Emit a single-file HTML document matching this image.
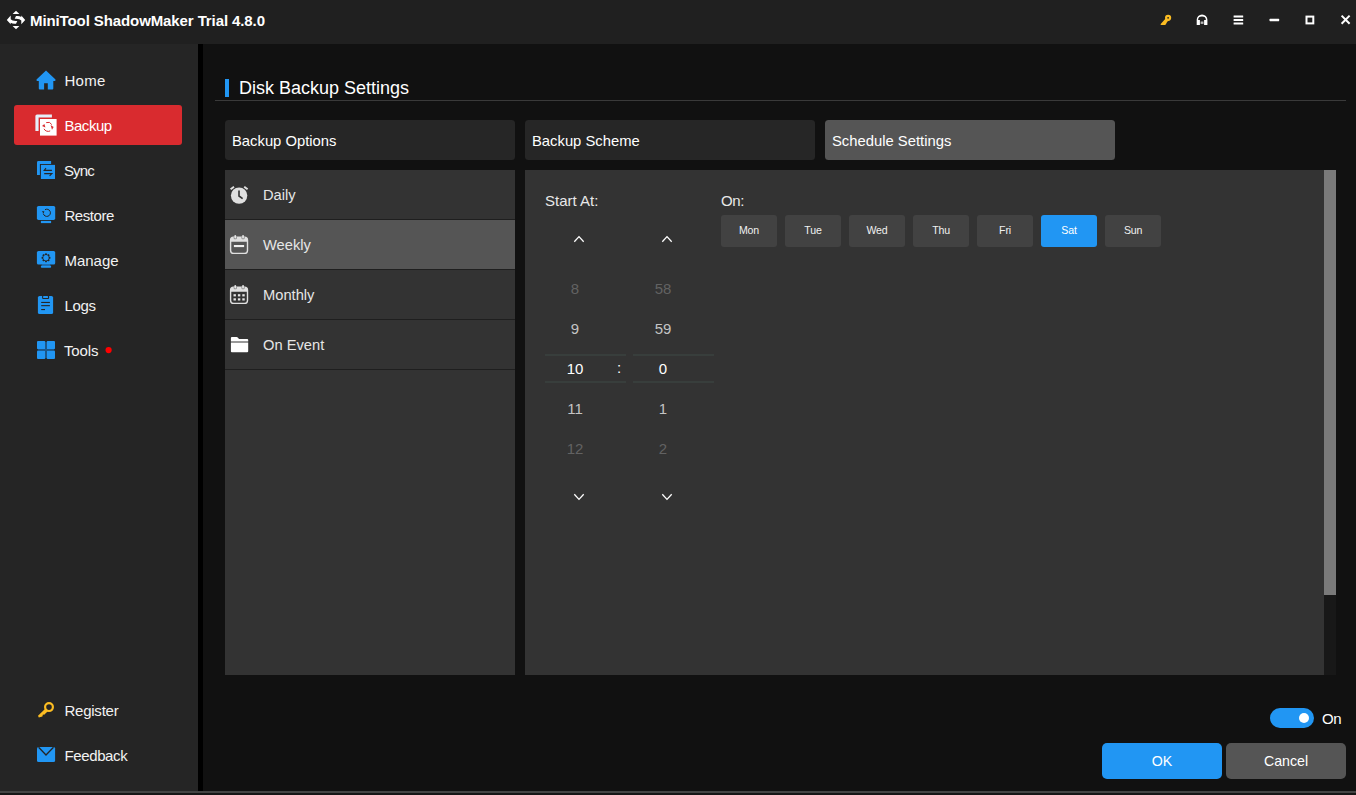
<!DOCTYPE html>
<html>
<head>
<meta charset="utf-8">
<title>MiniTool ShadowMaker Trial 4.8.0</title>
<style>
*{box-sizing:border-box;margin:0;padding:0}
html,body{width:1356px;height:795px;overflow:hidden;background:#111111;font-family:"Liberation Sans",sans-serif;color:#fff}
.abs{position:absolute}
#titlebar{position:absolute;left:0;top:0;width:1356px;height:44px;background:#202020}
#apptitle{position:absolute;left:30px;top:12px;font-size:15px;font-weight:bold;line-height:18px;white-space:nowrap;color:#fff;letter-spacing:-0.1px}
#sidebar{position:absolute;left:0;top:44px;width:198px;height:747px;background:#252525}
#divider{position:absolute;left:198px;top:44px;width:5px;height:747px;background:#000}
#bottomline{position:absolute;left:0;top:791px;width:1356px;height:2px;background:#444}
#bottomdark{position:absolute;left:0;top:793px;width:1356px;height:2px;background:#161616}
.nav{position:absolute;left:14px;width:168px;height:40px;border-radius:3px}
.nav.sel{background:#d92b2f}
.nav .lbl{position:absolute;left:50px;top:12px;font-size:15px;line-height:18px;white-space:nowrap;color:#f2f2f2}
.nav svg{position:absolute}
#pagetitle{position:absolute;left:239px;top:77px;font-size:18px;line-height:22px;white-space:nowrap;color:#fff}
#titlebarblue{position:absolute;left:225px;top:79px;width:4px;height:18px;background:#2196f3}
#titleline{position:absolute;left:215px;top:100px;width:1131px;height:1px;background:#3a3a3a}
.tab{position:absolute;top:120px;width:290px;height:40px;border-radius:3.5px;background:#262626;font-size:14.8px;line-height:42px;padding-left:7px;color:#fff;white-space:nowrap}
.tab.sel{background:#555}
#leftpanel{position:absolute;left:225px;top:170px;width:290px;height:505px;background:#333}
.row{position:absolute;left:0;width:290px;height:50px;border-bottom:1px solid #1f1f1f;font-size:15px;color:#e6e6e6}
.row.sel{background:#555}
.row .lbl{position:absolute;left:38px;top:16px;font-size:14.7px;line-height:18px;white-space:nowrap}
.row svg{position:absolute}
#mainpanel{position:absolute;left:525px;top:170px;width:799px;height:505px;background:#333}
#sbthumb{position:absolute;left:1324px;top:170px;width:12px;height:425px;background:#7a7a7a}
#sbtrack{position:absolute;left:1324px;top:595px;width:12px;height:80px;background:#181818}
.seg{position:absolute;font-size:15px;line-height:18px;white-space:nowrap;color:#e8e8e8}
.num{position:absolute;width:60px;text-align:center;font-size:15px;line-height:18px;white-space:nowrap}
.hl{position:absolute;height:2px;background:#383e3c}
.day{position:absolute;top:215px;width:56px;height:32px;border-radius:3px;background:#424242;color:#f0f0f0;font-size:10.6px;letter-spacing:-0.2px;line-height:31px;text-align:center}
.day.sel{background:#2196f3;color:#fff}
.btn{position:absolute;top:743px;width:120px;height:36px;border-radius:5px;font-size:14.2px;line-height:37px;text-align:center;color:#fff}
</style>
</head>
<body>
<div id="titlebar"></div>
<div id="apptitle">MiniTool ShadowMaker Trial 4.8.0</div>
<div id="sidebar"></div>
<div id="divider"></div>
<div id="bottomline"></div>
<div id="bottomdark"></div>

<!-- NAV -->
<div class="nav" style="top:60px"><div class="lbl" style="letter-spacing:0.3px;left:50.4px">Home</div></div>
<div class="nav sel" style="top:105px"><div class="lbl" style="color:#fff;letter-spacing:-0.45px;left:50.4px">Backup</div></div>
<div class="nav" style="top:150px"><div class="lbl" style="letter-spacing:-0.9px">Sync</div></div>
<div class="nav" style="top:195px"><div class="lbl" style="letter-spacing:-0.42px;left:50.4px">Restore</div></div>
<div class="nav" style="top:240px"><div class="lbl" style="left:50.4px">Manage</div></div>
<div class="nav" style="top:285px"><div class="lbl" style="letter-spacing:-0.3px;left:50.4px">Logs</div></div>
<div class="nav" style="top:330px"><div class="lbl" style="letter-spacing:-0.15px">Tools</div></div>
<div class="nav" style="top:690px"><div class="lbl" style="letter-spacing:-0.22px;left:50.4px">Register</div></div>
<div class="nav" style="top:735px"><div class="lbl" style="letter-spacing:-0.36px;left:50.4px">Feedback</div></div>

<!-- HEADER -->
<div id="titlebarblue"></div>
<div id="pagetitle">Disk Backup Settings</div>
<div id="titleline"></div>

<div class="tab" style="left:225px">Backup Options</div>
<div class="tab" style="left:525px">Backup Scheme</div>
<div class="tab sel" style="left:825px">Schedule Settings</div>

<div id="leftpanel">
  <div class="row" style="top:0"><div class="lbl">Daily</div></div>
  <div class="row sel" style="top:50px"><div class="lbl">Weekly</div></div>
  <div class="row" style="top:100px"><div class="lbl">Monthly</div></div>
  <div class="row" style="top:150px"><div class="lbl">On Event</div></div>
</div>

<div id="mainpanel"></div>
<div id="sbthumb"></div>
<div id="sbtrack"></div>

<div class="seg" style="left:545px;top:192px">Start At:</div>
<div class="seg" style="left:721px;top:192px;letter-spacing:-0.4px">On:</div>

<div class="day" style="left:721px">Mon</div>
<div class="day" style="left:785px">Tue</div>
<div class="day" style="left:849px">Wed</div>
<div class="day" style="left:913px">Thu</div>
<div class="day" style="left:977px">Fri</div>
<div class="day sel" style="left:1041px">Sat</div>
<div class="day" style="left:1105px">Sun</div>


<!-- TIME PICKER -->
<svg class="abs" style="left:573px;top:234px" width="12" height="9" viewBox="0 0 12 9"><path d="M1.3 7.7 L6 2.6 L10.7 7.7" fill="none" stroke="#fff" stroke-width="1.3"/></svg>
<svg class="abs" style="left:661px;top:234px" width="12" height="9" viewBox="0 0 12 9"><path d="M1.3 7.7 L6 2.6 L10.7 7.7" fill="none" stroke="#fff" stroke-width="1.3"/></svg>
<svg class="abs" style="left:573px;top:493px" width="12" height="9" viewBox="0 0 12 9"><path d="M1.3 1.3 L6 6.4 L10.7 1.3" fill="none" stroke="#fff" stroke-width="1.3"/></svg>
<svg class="abs" style="left:661px;top:493px" width="12" height="9" viewBox="0 0 12 9"><path d="M1.3 1.3 L6 6.4 L10.7 1.3" fill="none" stroke="#fff" stroke-width="1.3"/></svg>

<div class="num" style="left:545px;top:280px;color:#626262">8</div>
<div class="num" style="left:633px;top:280px;color:#626262">58</div>
<div class="num" style="left:545px;top:320px;color:#c4c4c4">9</div>
<div class="num" style="left:633px;top:320px;color:#c4c4c4">59</div>
<div class="hl" style="left:545px;top:354px;width:81px"></div>
<div class="hl" style="left:633px;top:354px;width:81px"></div>
<div class="num" style="left:545px;top:360px;color:#fff">10</div>
<div class="num" style="left:633px;top:360px;color:#fff">0</div>
<div class="seg" style="left:617px;top:359px;color:#fff">:</div>
<div class="hl" style="left:545px;top:381px;width:81px"></div>
<div class="hl" style="left:633px;top:381px;width:81px"></div>
<div class="num" style="left:545px;top:400px;color:#c4c4c4">11</div>
<div class="num" style="left:633px;top:400px;color:#c4c4c4">1</div>
<div class="num" style="left:545px;top:440px;color:#626262">12</div>
<div class="num" style="left:633px;top:440px;color:#626262">2</div>

<!-- TOGGLE -->
<div class="abs" style="left:1270px;top:708px;width:44px;height:20px;border-radius:10px;background:#2196f3"></div>
<div class="abs" style="left:1298.8px;top:713px;width:10.4px;height:10.4px;border-radius:5.2px;background:#fff"></div>
<div class="seg" style="left:1322px;top:710px;color:#fff;letter-spacing:-0.3px">On</div>

<div class="btn" style="left:1102px;background:#2196f3">OK</div>
<div class="btn" style="left:1226px;background:#555">Cancel</div>

<!-- ICONS -->
<svg class="abs" style="left:0;top:0" width="1356" height="795" viewBox="0 0 1356 795">
<!-- logo -->
<g fill="#fff">
<path d="M16 10.8 L19.4 13.9 L12.6 13.9 Z"/>
<path d="M16 29.2 L19.4 26.1 L12.6 26.1 Z"/>
<path d="M6.8 19.9 L10.7 15.5 L10.7 19.3 Q12.2 21.4 17.3 21 L16 23.7 Q12.6 24.1 10.7 22.8 L10.7 24.3 Z"/>
<path d="M25.2 19.9 L21.3 24.3 L21.3 20.5 Q19.8 18.4 14.7 18.8 L16 16.1 Q19.4 15.7 21.3 17 L21.3 15.5 Z"/>
</g>
<!-- titlebar key -->
<g>
<path d="M1165.6 18.6 L1160.7 23.9 L1160.7 25.1 L1165.3 25.1 L1166.3 23.4 L1167.2 21.8 L1169 20.6 Z" fill="#fbbc22"/>
<circle cx="1168.1" cy="17.8" r="2" fill="none" stroke="#fbbc22" stroke-width="2.2"/>
</g>
<!-- headset -->
<path d="M1196.7 25.1 L1196.7 19.8 A5.35 5.35 0 0 1 1207.4 19.8 L1207.4 25.1 L1204.1 25.1 L1204.1 19.9 L1205.9 19.9 A3.9 3.4 0 0 0 1198.1 19.9 L1199.9 19.9 L1199.9 25.1 Z" fill="#fff"/>
<rect x="1200.6" y="21.5" width="2.9" height="2.4" fill="#b5b5b5"/>
<!-- menu -->
<g fill="#fff">
<rect x="1233.6" y="15.5" width="9.6" height="2" rx="0.3"/>
<rect x="1233.6" y="19" width="9.6" height="2" rx="0.3"/>
<rect x="1233.6" y="22.5" width="9.6" height="2" rx="0.3"/>
<rect x="1269.5" y="18.8" width="9.7" height="2.4" rx="0.6"/>
</g>
<rect x="1306.5" y="16.6" width="6.8" height="6.8" fill="none" stroke="#fff" stroke-width="2"/>
<path d="M1341.6 15.6 L1349.6 23.8 M1349.6 15.6 L1341.6 23.8" stroke="#fff" stroke-width="2" fill="none"/>

<!-- home -->
<path d="M46 70.6 L55.5 79.5 Q55.9 80.9 54.8 80.9 L53.3 80.9 L53.3 88.6 Q53.3 89.6 52.3 89.6 L47.8 89.6 L47.8 83.2 L44.1 83.2 L44.1 89.6 L39.8 89.6 Q38.8 89.6 38.8 88.6 L38.8 80.9 L37.2 80.9 Q36.1 80.9 36.5 79.5 Z" fill="#2196f3"/>
<!-- backup -->
<path d="M35.4 130.9 L35.4 116 Q35.4 114.4 37 114.4 L51.9 114.4 L51.9 117.5 L38.6 117.5 L38.6 130.9 Z" fill="#e6effa"/>
<rect x="40" y="119" width="16.6" height="16.6" fill="#fff"/>
<g fill="none" stroke="#d92b2f" stroke-width="1">
<path d="M46.2 122.6 A4.6 4.6 0 0 1 51.8 124.6"/>
<path d="M50.2 130.9 A4.6 4.6 0 0 1 44 128.8"/>
</g>
<path d="M50.6 125 L53.6 127 L52 129.8 Z" fill="#d92b2f"/>
<path d="M42 126 L44.4 124 L45.4 127.6 Z" fill="#d92b2f"/>
<!-- sync -->
<path d="M37 174.9 L37 162.4 Q37 161 38.4 161 L51.1 161 L51.1 163.9 L39.9 163.9 L39.9 174.9 Z" fill="#2196f3"/>
<rect x="40.9" y="164.9" width="14.1" height="14.1" fill="#2196f3"/>
<g stroke="#252525" stroke-width="1.1" fill="none">
<path d="M51.9 170.4 L44.2 170.4 L46 168.2"/>
<path d="M44.2 173.6 L51.9 173.6 L49.6 175.9"/>
</g>
<!-- restore -->
<rect x="36.9" y="205.9" width="18.3" height="14" rx="1.6" fill="#2196f3"/>
<rect x="40.9" y="220.9" width="10.2" height="2.2" fill="#2196f3"/>
<path d="M43.3 213.6 A3.6 3.6 0 1 0 45 209.7" fill="none" stroke="#252525" stroke-width="1"/>
<path d="M41.9 211.3 L44.4 211.3 L43.6 213.6 Z" fill="#252525"/>
<!-- manage -->
<rect x="36.9" y="251" width="18.3" height="13.6" rx="1.6" fill="#2196f3"/>
<rect x="40.9" y="265.5" width="10.2" height="2.3" rx="0.8" fill="#2196f3"/>
<rect x="42" y="264" width="8" height="2" fill="#1d6fb5"/>
<g transform="translate(46 257.8)" fill="#252525">
<circle r="3.5"/>
<g id="teeth"><rect x="-0.9" y="-4.4" width="1.8" height="8.8"/><rect x="-0.9" y="-4.4" width="1.8" height="8.8" transform="rotate(45)"/><rect x="-0.9" y="-4.4" width="1.8" height="8.8" transform="rotate(90)"/><rect x="-0.9" y="-4.4" width="1.8" height="8.8" transform="rotate(135)"/></g>
<circle r="2.7" fill="#2196f3"/>
</g>
<!-- logs -->
<rect x="37.9" y="296" width="15.2" height="18" rx="1.6" fill="#2196f3"/>
<path d="M42.1 295.5 L42.1 297.9 Q42.1 298.9 43.1 298.9 L48.1 298.9 Q49.1 298.9 49.1 297.9 L49.1 295.5 Z" fill="#252525"/>
<rect x="43.1" y="296" width="4.9" height="1.9" rx="0.5" fill="#2196f3"/>
<g fill="#252525">
<rect x="41.2" y="301.9" width="8.7" height="1.1"/>
<rect x="41.2" y="305.1" width="8.7" height="1.1"/>
<rect x="41.2" y="309" width="3.8" height="1.1"/>
</g>
<!-- tools -->
<g fill="#2196f3">
<rect x="37" y="341" width="8.3" height="8.3" rx="1"/>
<rect x="46.7" y="341" width="8.3" height="8.3" rx="1"/>
<rect x="37" y="350.6" width="8.3" height="8.3" rx="1"/>
<rect x="46.7" y="350.6" width="8.3" height="8.3" rx="1"/>
</g>
<rect x="38" y="349.2" width="16" height="1.5" fill="#1c5d94"/>
<rect x="45.2" y="342" width="1.6" height="16" fill="#1c5d94"/>
<circle cx="108.6" cy="350.1" r="3.1" fill="#ff0000"/>
<!-- register key -->
<g>
<path d="M38 715.8 L45.2 708.8 L47.8 711.2 L44.2 714.8 L42.9 714.6 L42.4 716.4 L38.8 717.6 Z" fill="#fbbc22"/>
<circle cx="49" cy="707.1" r="3.9" fill="none" stroke="#fbbc22" stroke-width="2.2"/>
</g>
<!-- feedback -->
<rect x="37" y="747" width="18.1" height="15" rx="1.5" fill="#2196f3"/>
<path d="M38.6 747.2 L46 755 L53.5 747.2" fill="none" stroke="#252525" stroke-width="1.3"/>

<!-- daily clock -->
<g>
<circle cx="239.1" cy="195.6" r="8.2" fill="#e0e0e0"/>
<path d="M239 190.6 L239 196 L242.6 198.6" fill="none" stroke="#333" stroke-width="1.6"/>
<path d="M230.6 189.2 L234 186.7" stroke="#e0e0e0" stroke-width="2" fill="none"/>
<path d="M247.6 189.2 L244.2 186.7" stroke="#e0e0e0" stroke-width="2" fill="none"/>
</g>
<!-- weekly -->
<g>
<rect x="230.6" y="237.2" width="16.9" height="16.2" rx="3" fill="none" stroke="#e0e0e0" stroke-width="1.4"/>
<path d="M230.6 241.8 L230.6 240.2 Q230.6 237.2 233.6 237.2 L244.5 237.2 Q247.5 237.2 247.5 240.2 L247.5 241.8 Z" fill="#e0e0e0"/>
<rect x="233.7" y="236.2" width="3.1" height="3" rx="1" fill="#8c8c8c"/>
<rect x="241.5" y="236.2" width="3.1" height="3" rx="1" fill="#8c8c8c"/>
<rect x="234.4" y="234.9" width="1.7" height="3.6" rx="0.8" fill="#e6e6e6"/>
<rect x="242.2" y="234.9" width="1.7" height="3.6" rx="0.8" fill="#e6e6e6"/>
<rect x="233.9" y="245" width="10.2" height="2.1" fill="#f0f0f0"/>
</g>
<!-- monthly -->
<g>
<rect x="230.6" y="287.2" width="16.9" height="16.2" rx="3" fill="none" stroke="#e0e0e0" stroke-width="1.4"/>
<path d="M230.6 291.8 L230.6 290.2 Q230.6 287.2 233.6 287.2 L244.5 287.2 Q247.5 287.2 247.5 290.2 L247.5 291.8 Z" fill="#e0e0e0"/>
<rect x="233.7" y="286.2" width="3.1" height="3" rx="1" fill="#8c8c8c"/>
<rect x="241.5" y="286.2" width="3.1" height="3" rx="1" fill="#8c8c8c"/>
<rect x="234.4" y="284.9" width="1.7" height="3.6" rx="0.8" fill="#e6e6e6"/>
<rect x="242.2" y="284.9" width="1.7" height="3.6" rx="0.8" fill="#e6e6e6"/>
<rect x="233.5" y="294.2" width="2.4" height="2.2" fill="#e6e6e6"/><rect x="237.9" y="294.2" width="2.4" height="2.2" fill="#e6e6e6"/><rect x="242.3" y="294.2" width="2.4" height="2.2" fill="#e6e6e6"/><rect x="233.5" y="298.3" width="2.4" height="2.2" fill="#e6e6e6"/><rect x="237.9" y="298.3" width="2.4" height="2.2" fill="#e6e6e6"/><rect x="242.3" y="298.3" width="2.4" height="2.2" fill="#e6e6e6"/>
</g>
<!-- folder -->
<g fill="#fff">
<path d="M230.9 341.4 L230.9 338 Q230.9 337 231.9 337 L236.6 337 Q237.4 337 238 337.8 L239 339 L247.2 339 Q248.2 339 248.2 340 L248.2 341.4 Z"/>
<path d="M230.9 342.6 L248.2 342.6 L248.2 351.3 Q248.2 352.3 247.2 352.3 L231.9 352.3 Q230.9 352.3 230.9 351.3 Z"/>
</g>
</svg>
</body>
</html>
